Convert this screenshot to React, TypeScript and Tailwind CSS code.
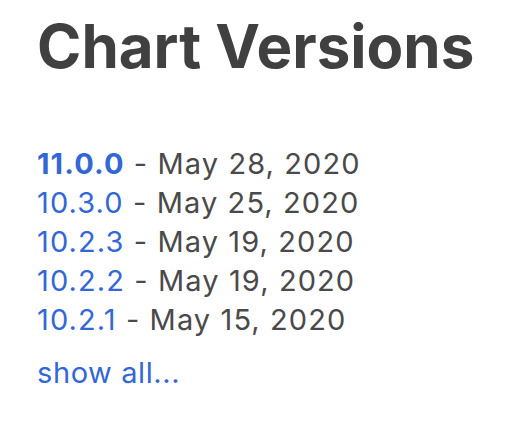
export default function App() {
  const versions = [
    { v: "11.0.0", date: "May 28, 2020", latest: true },
    { v: "10.3.0", date: "May 25, 2020" },
    { v: "10.2.3", date: "May 19, 2020" },
    { v: "10.2.2", date: "May 19, 2020" },
    { v: "10.2.1", date: "May 15, 2020" },
  ];

  return (
    <div className="min-h-screen bg-white px-[37px] pt-[10px]" style={{ fontFamily: "Inter, 'Noto Sans', sans-serif" }}>
      <h1 className="text-[60px] font-bold leading-[72px] text-[#404040]">Chart Versions</h1>
      <ul className="mt-[62px] text-[29px] leading-[39px] tracking-[1.1px] text-[#4a4a4a]">
        {versions.map((item) => (
          <li key={item.v}>
            <a href="#" className={`text-[#3367d6] ${item.latest ? "font-bold" : ""}`}>
              {item.v}
            </a>{" "}
            - {item.date}
          </li>
        ))}
      </ul>
      <a href="#" className="mt-[14px] block text-[29px] leading-[39px] tracking-[0.6px] text-[#3367d6]">
        show all...
      </a>
    </div>
  );
}
